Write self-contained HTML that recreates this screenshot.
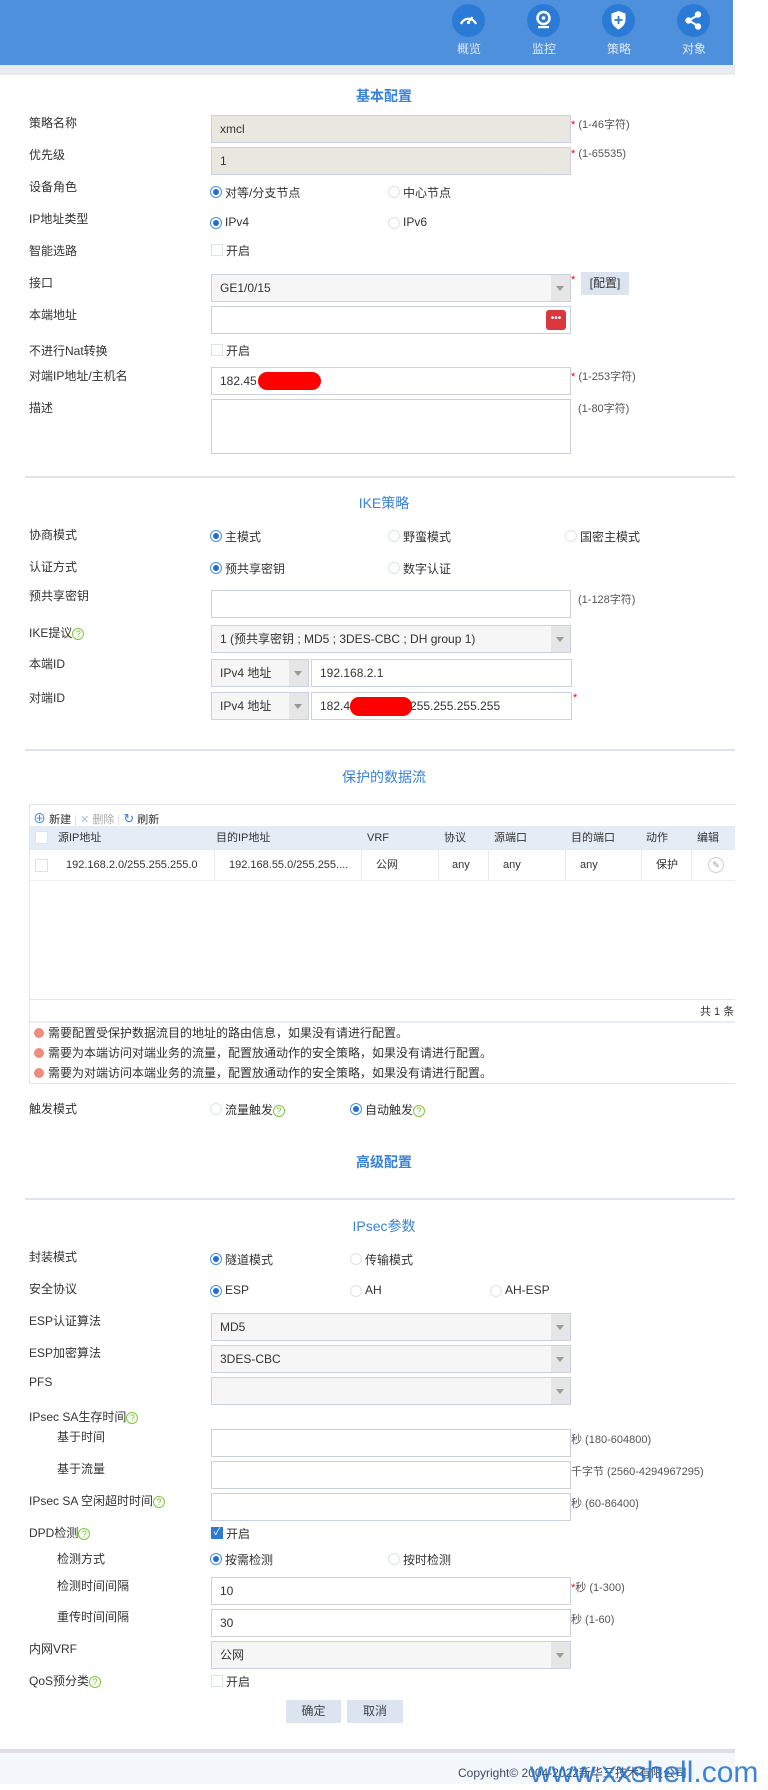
<!DOCTYPE html>
<html><head><meta charset="utf-8">
<style>
*{margin:0;padding:0;box-sizing:border-box}
body{width:768px;height:1784px;background:#fff;position:relative;overflow:hidden;font-family:"Liberation Sans","Noto Sans CJK SC",sans-serif;font-size:12px;color:#333}
.a{position:absolute;white-space:nowrap}
.hdr{left:0;top:0;width:733px;height:65px;background:#4f90dc}
.strip{left:0;top:65px;width:735px;height:10px;background:#e8ebf0}
.ic{width:33px;height:33px;border-radius:50%;background:#2a7ad6}
.il{color:#dfe9f7;font-size:12px;width:40px;text-align:center}
.t{color:#3a82d8;font-size:14px;font-weight:bold;width:768px;left:0;text-align:center}
.t2{color:#3a82d8;font-size:14px;width:768px;left:0;text-align:center}
.lb{left:29px;font-size:12px;color:#333}
.lb2{left:57px;font-size:12px;color:#333}
.in{left:211px;width:360px;height:28px;border:1px solid #c9d1e3;background:#fff;padding-left:8px;line-height:26px;font-size:12px}
.ro{background:#e9e8e0}
.sel{background:#f6f6f6}
.sel:after{content:"";position:absolute;right:0;top:0;width:19px;height:100%;background:#e6e6e6}
.sel:before{content:"";position:absolute;right:6px;top:11px;border:4px solid transparent;border-top:5px solid #999;z-index:2}
.hint{left:571px;font-size:11px;color:#555}
.star{color:#e00;font-size:11px}
.rd{width:12px;height:12px;border-radius:50%;border:1px solid #dde3ec;background:#fff}
.rd.on{border:1px solid #4a8fe0}
.rd.on:after{content:"";position:absolute;left:2px;top:2px;width:6px;height:6px;border-radius:50%;background:#1f6fd6}
.cb{width:12px;height:12px;border:1px solid #dde3ec;background:#fff}
.op{font-size:12px;color:#333}
.div{left:25px;width:710px;height:2px;background:#dfe4f0}
.q{display:inline-block;width:12px;height:12px;border:1px solid #7cc83a;border-radius:50%;color:#6bbd2a;font-size:9px;line-height:10px;text-align:center;vertical-align:middle}
.th{top:826px;height:24px;background:#e4ecf5;line-height:24px;font-size:11px}
.td{top:850px;height:30px;line-height:30px;font-size:11px;border-right:1px solid #e6e9f0}
.dot{display:inline-block;width:10px;height:10px;border-radius:50%;background:#f08c7c;margin-right:4px;vertical-align:-1px}
.btn{top:1700px;height:23px;background:#dce4ef;line-height:23px;text-align:center;font-size:12px;color:#444}
</style></head><body>
<div class="a hdr"></div>
<div class="a strip"></div>
<div class="a ic" style="left:452px;top:4px"><svg width="33" height="33" viewBox="0 0 33 33"><path d="M9 20a8 8 0 0 1 15 0" fill="none" stroke="#fff" stroke-width="2.2"/><path d="M16.5 18l4-5" stroke="#fff" stroke-width="2"/><circle cx="16.5" cy="18.5" r="1.6" fill="#fff"/></svg></div>
<div class="a ic" style="left:527px;top:4px"><svg width="33" height="33" viewBox="0 0 33 33"><circle cx="16.5" cy="14" r="6" fill="none" stroke="#fff" stroke-width="2.5"/><circle cx="16.5" cy="14" r="1.8" fill="#fff"/><rect x="11" y="22" width="11" height="2.2" fill="#fff"/></svg></div>
<div class="a ic" style="left:602px;top:4px"><svg width="33" height="33" viewBox="0 0 33 33"><path d="M16.5 7l7 2.5v6c0 5-3.5 8-7 10-3.5-2-7-5-7-10v-6z" fill="#fff"/><path d="M16.5 12v8M12.5 16h8" stroke="#2a7ad6" stroke-width="1.8"/></svg></div>
<div class="a ic" style="left:677px;top:4px"><svg width="33" height="33" viewBox="0 0 33 33"><path d="M12 16.5L21 11M12 16.5L21 22" stroke="#fff" stroke-width="2"/><circle cx="21" cy="10.5" r="3.2" fill="#fff"/><circle cx="11.5" cy="16.5" r="3.2" fill="#fff"/><circle cx="21" cy="22.5" r="3.2" fill="#fff"/></svg></div>
<div class="a il" style="left:449px;top:40px">概览</div>
<div class="a il" style="left:524px;top:40px">监控</div>
<div class="a il" style="left:599px;top:40px">策略</div>
<div class="a il" style="left:674px;top:40px">对象</div>

<div class="a t" style="top:86px">基本配置</div>
<div class="a lb" style="top:114px">策略名称</div>
<div class="a in ro" style="top:115px">xmcl</div>
<div class="a hint" style="top:116px"><span class="star">*</span>  (1-46字符)</div>
<div class="a lb" style="top:146px">优先级</div>
<div class="a in ro" style="top:147px">1</div>
<div class="a hint" style="top:148px"><span class="star">*</span>  (1-65535)</div>
<div class="a lb" style="top:178px">设备角色</div>
<div class="a rd on" style="left:210px;top:186px"></div><div class="a op" style="left:225px;top:184px">对等/分支节点</div>
<div class="a rd" style="left:388px;top:186px"></div><div class="a op" style="left:403px;top:184px">中心节点</div>
<div class="a lb" style="top:210px">IP地址类型</div>
<div class="a rd on" style="left:210px;top:217px"></div><div class="a op" style="left:225px;top:215px">IPv4</div>
<div class="a rd" style="left:388px;top:217px"></div><div class="a op" style="left:403px;top:215px">IPv6</div>
<div class="a lb" style="top:242px">智能选路</div>
<div class="a cb" style="left:211px;top:244px"></div><div class="a op" style="left:226px;top:242px">开启</div>
<div class="a lb" style="top:274px">接口</div>
<div class="a in sel" style="top:274px">GE1/0/15</div>
<div class="a star" style="left:571px;top:274px">*</div>
<div class="a" style="left:581px;top:272px;width:48px;height:23px;background:#dce4ef;text-align:center;line-height:23px;font-size:12px">[配置]</div>
<div class="a lb" style="top:306px">本端地址</div>
<div class="a in" style="top:306px"></div>
<div class="a" style="left:546px;top:310px;width:20px;height:20px;border-radius:3px;background:#d9363e;color:#fff;font-size:10px;line-height:18px;text-align:center">•••</div>
<div class="a lb" style="top:342px">不进行Nat转换</div>
<div class="a cb" style="left:211px;top:344px"></div><div class="a op" style="left:226px;top:342px">开启</div>
<div class="a lb" style="top:367px">对端IP地址/主机名</div>
<div class="a in" style="top:367px">182.45</div>
<div class="a" style="left:258px;top:372px;width:63px;height:18px;border-radius:9px;background:#f00"></div>
<div class="a hint" style="top:368px"><span class="star">*</span>  (1-253字符)</div>
<div class="a lb" style="top:399px">描述</div>
<div class="a in" style="top:399px;height:55px"></div>
<div class="a hint" style="left:578px;top:400px">(1-80字符)</div>
<div class="a div" style="top:476px"></div>

<div class="a t2" style="top:493px">IKE策略</div>
<div class="a lb" style="top:526px">协商模式</div>
<div class="a rd on" style="left:210px;top:530px"></div><div class="a op" style="left:225px;top:528px">主模式</div>
<div class="a rd" style="left:388px;top:530px"></div><div class="a op" style="left:403px;top:528px">野蛮模式</div>
<div class="a rd" style="left:565px;top:530px"></div><div class="a op" style="left:580px;top:528px">国密主模式</div>
<div class="a lb" style="top:558px">认证方式</div>
<div class="a rd on" style="left:210px;top:562px"></div><div class="a op" style="left:225px;top:560px">预共享密钥</div>
<div class="a rd" style="left:388px;top:562px"></div><div class="a op" style="left:403px;top:560px">数字认证</div>
<div class="a lb" style="top:587px">预共享密钥</div>
<div class="a in" style="top:590px"></div>
<div class="a hint" style="left:578px;top:591px">(1-128字符)</div>
<div class="a lb" style="top:624px">IKE提议<span class="q">?</span></div>
<div class="a in sel" style="top:625px">1 (预共享密钥 ; MD5 ; 3DES-CBC ; DH group 1)</div>
<div class="a lb" style="top:655px">本端ID</div>
<div class="a in sel" style="top:659px;width:98px">IPv4 地址</div>
<div class="a in" style="top:659px;left:311px;width:261px">192.168.2.1</div>
<div class="a lb" style="top:689px">对端ID</div>
<div class="a in sel" style="top:692px;width:98px">IPv4 地址</div>
<div class="a in" style="top:692px;left:311px;width:261px">182.4<span style="display:inline-block;width:60px"></span>255.255.255.255</div>
<div class="a" style="left:350px;top:697px;width:62px;height:19px;border-radius:9px;background:#f00"></div>
<div class="a star" style="left:573px;top:692px">*</div>
<div class="a div" style="top:749px"></div>

<div class="a t2" style="top:767px">保护的数据流</div>
<div class="a" style="left:29px;top:804px;width:706px;height:280px;border:1px solid #dfe4f0;border-right:none"></div>
<div class="a" style="left:33px;top:808px;font-size:11px"><span style="color:#3a82d8;font-size:13px">⊕</span> 新建 <span style="color:#ddd">|</span> <span style="color:#a8c4e6">✕</span> <span style="color:#aaa">删除</span> <span style="color:#ddd">|</span> <span style="color:#3a82d8;font-size:13px">↻</span> 刷新</div>
<div class="a th" style="left:30px;width:705px"></div>
<div class="a cb" style="left:35px;top:831px;width:13px;height:13px"></div>
<div class="a th" style="left:58px">源IP地址</div>
<div class="a th" style="left:216px">目的IP地址</div>
<div class="a th" style="left:367px">VRF</div>
<div class="a th" style="left:444px">协议</div>
<div class="a th" style="left:494px">源端口</div>
<div class="a th" style="left:571px">目的端口</div>
<div class="a th" style="left:646px">动作</div>
<div class="a th" style="left:697px">编辑</div>
<div class="a" style="left:30px;top:880px;width:705px;height:1px;background:#eef0f4"></div>
<div class="a cb" style="left:35px;top:859px;width:13px;height:13px"></div>
<div class="a td" style="left:30px;width:185px;padding-left:36px">192.168.2.0/255.255.255.0</div>
<div class="a td" style="left:215px;width:147px;padding-left:14px">192.168.55.0/255.255....</div>
<div class="a td" style="left:362px;width:77px;padding-left:14px">公网</div>
<div class="a td" style="left:439px;width:50px;padding-left:13px">any</div>
<div class="a td" style="left:489px;width:77px;padding-left:14px">any</div>
<div class="a td" style="left:566px;width:76px;padding-left:14px">any</div>
<div class="a td" style="left:642px;width:50px;padding-left:14px">保护</div>
<div class="a" style="left:708px;top:857px;width:16px;height:16px;border-radius:50%;border:1px solid #ccd;color:#99a;font-size:9px;text-align:center;line-height:14px">✎</div>
<div class="a" style="left:30px;top:999px;width:705px;height:1px;background:#dfe4f0"></div>
<div class="a" style="left:700px;top:1003px;font-size:11px">共 1 条</div>
<div class="a" style="left:30px;top:1021px;width:705px;height:2px;background:#e8ecf4"></div>
<div class="a" style="left:34px;top:1023px;font-size:12px;line-height:20px"><span class="dot"></span>需要配置受保护数据流目的地址的路由信息，如果没有请进行配置。<br><span class="dot"></span>需要为本端访问对端业务的流量，配置放通动作的安全策略，如果没有请进行配置。<br><span class="dot"></span>需要为对端访问本端业务的流量，配置放通动作的安全策略，如果没有请进行配置。</div>
<div class="a lb" style="top:1100px">触发模式</div>
<div class="a rd" style="left:210px;top:1103px"></div><div class="a op" style="left:225px;top:1101px">流量触发<span class="q">?</span></div>
<div class="a rd on" style="left:350px;top:1103px"></div><div class="a op" style="left:365px;top:1101px">自动触发<span class="q">?</span></div>

<div class="a t" style="top:1152px">高级配置</div>
<div class="a div" style="top:1198px"></div>
<div class="a t2" style="top:1216px">IPsec参数</div>
<div class="a lb" style="top:1248px">封装模式</div>
<div class="a rd on" style="left:210px;top:1253px"></div><div class="a op" style="left:225px;top:1251px">隧道模式</div>
<div class="a rd" style="left:350px;top:1253px"></div><div class="a op" style="left:365px;top:1251px">传输模式</div>
<div class="a lb" style="top:1280px">安全协议</div>
<div class="a rd on" style="left:210px;top:1285px"></div><div class="a op" style="left:225px;top:1283px">ESP</div>
<div class="a rd" style="left:350px;top:1285px"></div><div class="a op" style="left:365px;top:1283px">AH</div>
<div class="a rd" style="left:490px;top:1285px"></div><div class="a op" style="left:505px;top:1283px">AH-ESP</div>
<div class="a lb" style="top:1312px">ESP认证算法</div>
<div class="a in sel" style="top:1313px">MD5</div>
<div class="a lb" style="top:1344px">ESP加密算法</div>
<div class="a in sel" style="top:1345px">3DES-CBC</div>
<div class="a lb" style="top:1375px">PFS</div>
<div class="a in sel" style="top:1377px"></div>
<div class="a lb" style="top:1408px">IPsec SA生存时间<span class="q">?</span></div>
<div class="a lb2" style="top:1428px">基于时间</div>
<div class="a in" style="top:1429px"></div>
<div class="a hint" style="top:1431px">秒 (180-604800)</div>
<div class="a lb2" style="top:1460px">基于流量</div>
<div class="a in" style="top:1461px"></div>
<div class="a hint" style="top:1463px">千字节 (2560-4294967295)</div>
<div class="a lb" style="top:1492px">IPsec SA 空闲超时时间<span class="q">?</span></div>
<div class="a in" style="top:1493px"></div>
<div class="a hint" style="top:1495px">秒 (60-86400)</div>
<div class="a lb" style="top:1524px">DPD检测<span class="q">?</span></div>
<div class="a" style="left:211px;top:1527px;width:12px;height:12px;background:#2a7ad6;color:#fff;font-size:10px;line-height:12px;text-align:center">✓</div><div class="a op" style="left:226px;top:1525px">开启</div>
<div class="a lb2" style="top:1550px">检测方式</div>
<div class="a rd on" style="left:210px;top:1553px"></div><div class="a op" style="left:225px;top:1551px">按需检测</div>
<div class="a rd" style="left:388px;top:1553px"></div><div class="a op" style="left:403px;top:1551px">按时检测</div>
<div class="a lb2" style="top:1577px">检测时间间隔</div>
<div class="a in" style="top:1577px">10</div>
<div class="a hint" style="top:1579px"><span class="star">*</span>秒 (1-300)</div>
<div class="a lb2" style="top:1608px">重传时间间隔</div>
<div class="a in" style="top:1609px">30</div>
<div class="a hint" style="top:1611px">秒 (1-60)</div>
<div class="a lb" style="top:1640px">内网VRF</div>
<div class="a in sel" style="top:1641px">公网</div>
<div class="a lb" style="top:1672px">QoS预分类<span class="q">?</span></div>
<div class="a cb" style="left:211px;top:1675px"></div><div class="a op" style="left:226px;top:1673px">开启</div>
<div class="a btn" style="left:286px;width:55px">确定</div>
<div class="a btn" style="left:347px;width:56px">取消</div>
<div class="a" style="left:0;top:1749px;width:735px;height:4px;background:#dcdfe5"></div>
<div class="a" style="left:0;top:1753px;width:735px;height:31px;background:#f4f7fb"></div>
<div class="a" style="left:458px;top:1764px;font-size:12px;color:#3a4a6a">Copyright© 2004-2022新华三技术有限公司</div>
<div class="a" style="left:530px;top:1756px;font-size:30px;color:#1d6fcf;opacity:.85;font-family:'Liberation Sans',sans-serif">www.xxshell.com</div>
</body></html>
